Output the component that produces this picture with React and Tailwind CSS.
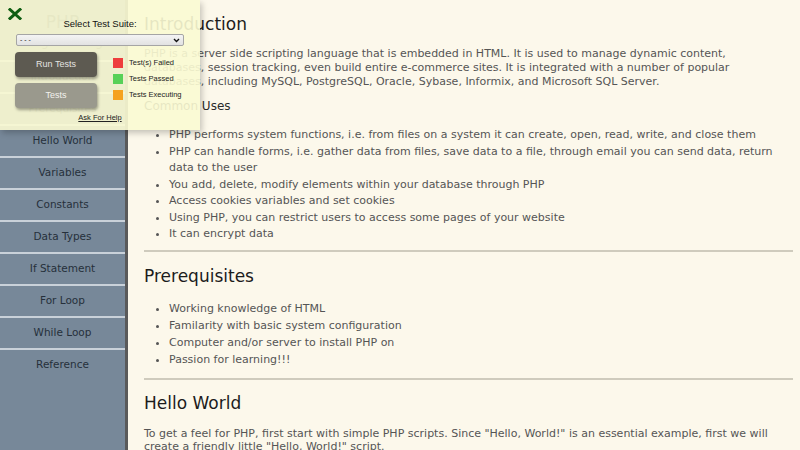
import React from "react";

const navItems = [
  "Introduction",
  "Prerequisites",
  "Hello World",
  "Variables",
  "Constants",
  "Data Types",
  "If Statement",
  "For Loop",
  "While Loop",
  "Reference",
];

const uses = [
  "PHP performs system functions, i.e. from files on a system it can create, open, read, write, and close them",
  "PHP can handle forms, i.e. gather data from files, save data to a file, through email you can send data, return data to the user",
  "You add, delete, modify elements within your database through PHP",
  "Access cookies variables and set cookies",
  "Using PHP, you can restrict users to access some pages of your website",
  "It can encrypt data",
];

const prereqs = [
  "Working knowledge of HTML",
  "Familarity with basic system configuration",
  "Computer and/or server to install PHP on",
  "Passion for learning!!!",
];

export default function App() {
  return (
    <div className="relative w-[800px] h-[450px] overflow-hidden flex bg-[#fcf8eb] font-['DejaVu_Sans',sans-serif]">
      {/* Sidebar */}
      <aside className="w-[128px] shrink-0 bg-[#778899] border-r-[3px] border-[#5a5a5a] flex flex-col text-[#26303b]">
        <div className="h-[60px] flex flex-col items-center pt-[12px]">
          <div className="text-[17px] leading-[20px]">PHP</div>
          <div className="text-[12px] leading-[16px] mt-[2px]">Programming</div>
        </div>
        {navItems.map((item) => (
          <div
            key={item}
            className="h-[32px] border-t-2 border-[#c9d1d9] flex items-center justify-center text-[10.5px]"
          >
            {item}
          </div>
        ))}
      </aside>

      {/* Main content */}
      <main className="flex-1 pl-4 pr-[7px] pt-[14px] text-[#555] text-[11px]">
        <h1 className="text-[17px] leading-[20px] text-[#1c1c1c]">Introduction</h1>
        <p className="mt-[13px] leading-[14px]">
          PHP is a server side scripting language that is embedded in HTML. It is used to manage dynamic content,
          <br />
          databases, session tracking, even build entire e-commerce sites. It is integrated with a number of popular
          <br />
          databases, including MySQL, PostgreSQL, Oracle, Sybase, Informix, and Microsoft SQL Server.
        </p>
        <h3 className="mt-[9px] text-[12px] leading-[16px] text-[#2a2a2a]">Common Uses</h3>
        <ul className="mt-[13px] pl-[25px] list-disc leading-[16.5px]">
          {uses.map((u) => (
            <li key={u}>{u}</li>
          ))}
        </ul>
        <hr className="mt-[7px] border-0 h-[2px] bg-[#cfcbbd]" />
        <h2 className="mt-[14px] text-[17px] leading-[20px] text-[#1c1c1c]">Prerequisites</h2>
        <ul className="mt-[14px] pl-[25px] list-disc leading-[17px]">
          {prereqs.map((u) => (
            <li key={u}>{u}</li>
          ))}
        </ul>
        <hr className="mt-[10px] border-0 h-[2px] bg-[#cfcbbd]" />
        <h2 className="mt-[13px] text-[17px] leading-[20px] text-[#1c1c1c]">Hello World</h2>
        <p className="mt-[14px] leading-[13px]">
          To get a feel for PHP, first start with simple PHP scripts. Since "Hello, World!" is an essential example, first we will
          create a friendly little "Hello, World!" script.
        </p>
      </main>

      {/* Test overlay panel */}
      <div className="absolute left-0 top-0 w-[200px] h-[130px] bg-[#fafad2]/[0.91] shadow-[2px_3px_6px_rgba(0,0,0,0.22)] flex flex-col font-['Liberation_Sans',Arial,sans-serif]">
        <svg
          className="absolute left-[8px] top-[8px]"
          width="14"
          height="12"
          viewBox="0 0 14 12"
        >
          <path d="M2 1.5 L12 10.5 M12 1.5 L2 10.5" stroke="#0f5e12" strokeWidth="3" strokeLinecap="square" />
        </svg>
        <div className="pt-[19px] text-center text-[9.5px] leading-[10px] text-[#111]">Select Test Suite:</div>
        <div className="mx-[16px] mt-[5px] h-[12px] rounded-[2px] border border-[#a5a5a5] bg-gradient-to-b from-[#f4f4f4] to-[#e2e2e2] flex items-center justify-between pl-[3px] pr-[3px]">
          <span className="text-[7px] leading-[8px] text-[#222]">- - -</span>
          <svg width="7" height="5" viewBox="0 0 7 5">
            <path d="M1 1 L3.5 3.5 L6 1" fill="none" stroke="#111" strokeWidth="1.4" />
          </svg>
        </div>
        <div className="mt-[6px] flex">
          <div className="ml-[15px] w-[82px] flex flex-col gap-[6px]">
            <div className="h-[25px] rounded-[4px] bg-[#5d5a51] text-[#e4e4e0] text-[9px] flex items-center justify-center shadow-[1px_2px_3px_rgba(0,0,0,0.35)]">
              Run Tests
            </div>
            <div className="h-[25px] rounded-[4px] bg-[#9a998d] text-[#f2f2ee] text-[9px] flex items-center justify-center shadow-[1px_2px_3px_rgba(0,0,0,0.35)]">
              Tests
            </div>
          </div>
          <div className="ml-[16px] pt-[6px] flex flex-col gap-[6px] text-[7.5px] text-[#222]">
            <div className="h-[10px] flex items-center gap-[6px]">
              <span className="w-[10px] h-[10px] bg-[#ee3d3d]" />
              <span>Test(s) Failed</span>
            </div>
            <div className="h-[10px] flex items-center gap-[6px]">
              <span className="w-[10px] h-[10px] bg-[#58d158]" />
              <span>Tests Passed</span>
            </div>
            <div className="h-[10px] flex items-center gap-[6px]">
              <span className="w-[10px] h-[10px] bg-[#f5a21f]" />
              <span>Tests Executing</span>
            </div>
          </div>
        </div>
        <div className="mt-[6px] text-center text-[7.5px] leading-[8px] underline text-[#222]">Ask For Help</div>
      </div>
    </div>
  );
}
